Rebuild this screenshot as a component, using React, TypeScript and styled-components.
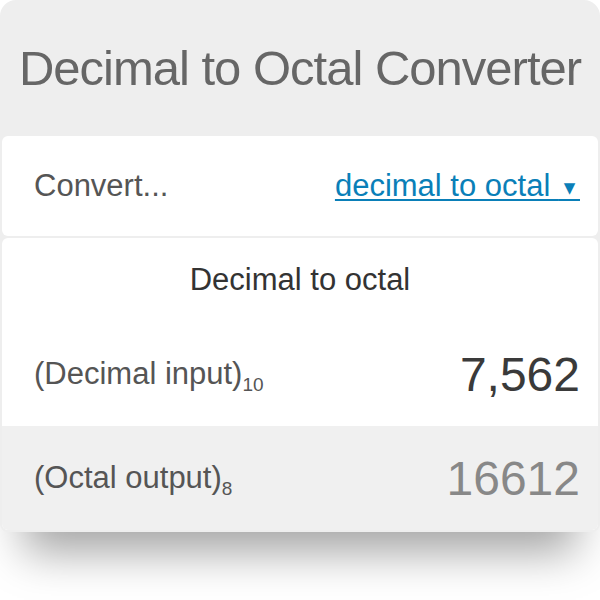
import React from "react";
import styled, { createGlobalStyle } from "styled-components";

const GlobalStyle = createGlobalStyle`
  html, body { background: #ffffff; }
  body {
    margin: 0;
    padding: 0;
    font-family: "Liberation Sans", Arial, Helvetica, sans-serif;
  }
`;

const Page = styled.main`
  width: 600px;
  min-height: 600px;
  box-sizing: border-box;
  background: #ffffff;
  overflow: hidden;
`;

const Widget = styled.div`
  width: 600px;
  background: #eeeeee;
  border-radius: 16px 16px 8px 8px;
  display: flex;
  flex-direction: column;
  box-shadow: 0 44px 42px -24px rgba(0, 0, 0, 0.36);
`;

const Header = styled.header`
  height: 136px;
  display: flex;
  align-items: center;
  justify-content: center;
`;

const Title = styled.h1`
  margin: 0;
  font-weight: 400;
  font-size: 49px;
  letter-spacing: -1px;
  color: #666666;
`;

const Body = styled.div`
  display: flex;
  flex-direction: column;
  gap: 2px;
  padding: 0 2px 2px;
`;

const Card = styled.section`
  background: #ffffff;
  border-radius: 6px;
  overflow: hidden;
  display: flex;
  flex-direction: column;
`;

const Row = styled.div<{ $h: number; $shade?: boolean }>`
  height: ${(p) => p.$h}px;
  display: flex;
  align-items: center;
  justify-content: space-between;
  padding: 0 18px 0 32px;
  background: ${(p) => (p.$shade ? "#f0f0f0" : "#ffffff")};
`;

const Label = styled.span`
  font-size: 31px;
  color: #555555;
`;

const Sub = styled.sub`
  font-size: 19px;
  vertical-align: -7px;
  line-height: 0;
`;

const Link = styled.a`
  font-size: 31px;
  color: #0a7fb8;
  text-decoration: underline;
  text-underline-offset: 3px;
  text-decoration-thickness: 2px;
  cursor: pointer;
  white-space: pre;
`;

const Caret = styled.span`
  font-family: "DejaVu Sans", sans-serif;
  font-size: 15px;
  vertical-align: 3px;
`;

const SectionTitle = styled.div`
  height: 84px;
  display: flex;
  align-items: center;
  justify-content: center;
  font-size: 31px;
  color: #333333;
`;

const Value = styled.span<{ $muted?: boolean }>`
  font-size: 48px;
  color: ${(p) => (p.$muted ? "#888888" : "#3a3a3a")};
`;

export default function App() {
  return (
    <>
      <GlobalStyle />
      <Page>
        <Widget>
          <Header>
            <Title>Decimal to Octal Converter</Title>
          </Header>
          <Body>
            <Card>
              <Row $h={100}>
                <Label>Convert...</Label>
                <Link>
                  {"decimal to octal "}
                  <Caret>{"\u00a0▼\u00a0"}</Caret>
                </Link>
              </Row>
            </Card>
            <Card>
              <SectionTitle>Decimal to octal</SectionTitle>
              <Row $h={104}>
                <Label>
                  (Decimal input)<Sub>10</Sub>
                </Label>
                <Value>7,562</Value>
              </Row>
              <Row $h={104} $shade>
                <Label>
                  (Octal output)<Sub>8</Sub>
                </Label>
                <Value $muted>16612</Value>
              </Row>
            </Card>
          </Body>
        </Widget>
      </Page>
    </>
  );
}
